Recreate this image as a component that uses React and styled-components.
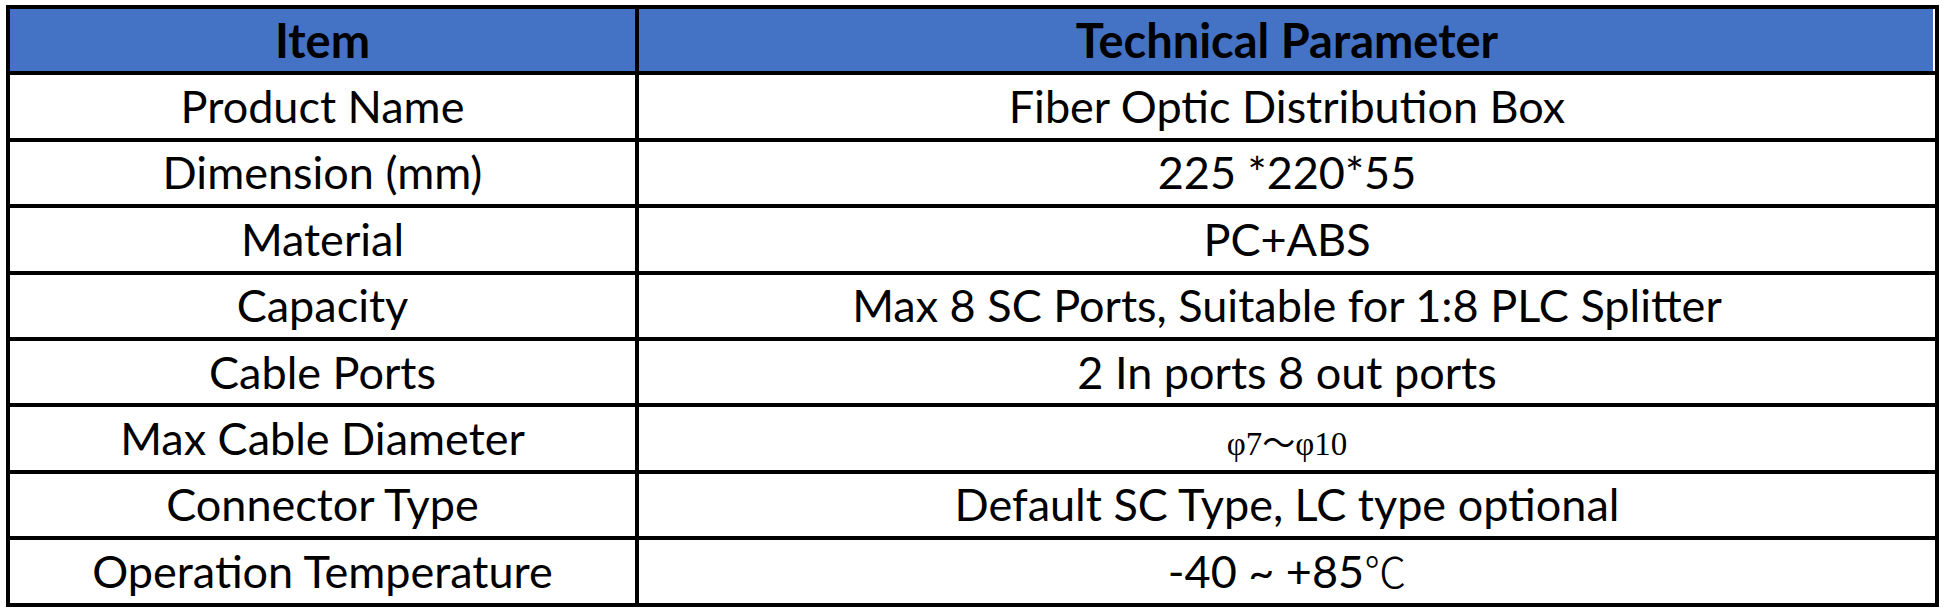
import * as React from "react";
import styled, { createGlobalStyle } from "styled-components";

const GlobalStyle = createGlobalStyle`
  html, body {
    margin: 0;
    padding: 0;
    background: #fff;
  }
  body {
    padding: 5px 6px;
  }
`;

const Table = styled.table`
  width: 1933px;
  table-layout: fixed;
  border-collapse: collapse;
  border: 4px solid #000;
  font-family: Lato, "Liberation Sans", sans-serif;
  color: #000;
`;

const HeadCell = styled.th`
  height: 62.4px;
  padding: 0;
  border: 4px solid #000;
  background: #4472c4;
  font-size: 47px;
  line-height: 1;
  font-weight: 700;
  text-align: center;
  vertical-align: middle;
  box-shadow: ${(p) => (p.$last ? "inset -2px 0 0 #fff" : "none")};
`;

const Cell = styled.td`
  height: 62.4px;
  padding: 0;
  border: 4px solid #000;
  font-size: 45px;
  line-height: 1;
  font-weight: 400;
  text-align: center;
  vertical-align: middle;
`;

const Serif = styled.span`
  font-family: "Liberation Serif", "Noto Sans CJK SC", serif;
  font-size: 33px;
`;

const Degree = styled.span`
  font-family: "Noto Sans CJK SC", "Liberation Serif", serif;
  font-size: 42px;
  font-weight: 300;
`;

function App() {
  const rows = [
    ["Product Name", "Fiber Optic Distribution Box"],
    ["Dimension (mm)", "225 *220*55"],
    ["Material", "PC+ABS"],
    ["Capacity", "Max 8 SC Ports, Suitable for 1:8 PLC Splitter"],
    ["Cable Ports", "2 In ports 8 out ports"],
    ["Max Cable Diameter", <Serif>φ7～φ10</Serif>],
    ["Connector Type", "Default SC Type, LC type optional"],
    [
      "Operation Temperature",
      <>
        -40 ~ +85<Degree>℃</Degree>
      </>,
    ],
  ];

  return (
    <>
      <GlobalStyle />
      <Table>
        <colgroup>
          <col style={{ width: 629 }} />
          <col />
        </colgroup>
        <thead>
          <tr>
            <HeadCell>Item</HeadCell>
            <HeadCell $last>Technical Parameter</HeadCell>
          </tr>
        </thead>
        <tbody>
          {rows.map(([item, value], i) => (
            <tr key={i}>
              <Cell>{item}</Cell>
              <Cell>{value}</Cell>
            </tr>
          ))}
        </tbody>
      </Table>
    </>
  );
}

export default App;
